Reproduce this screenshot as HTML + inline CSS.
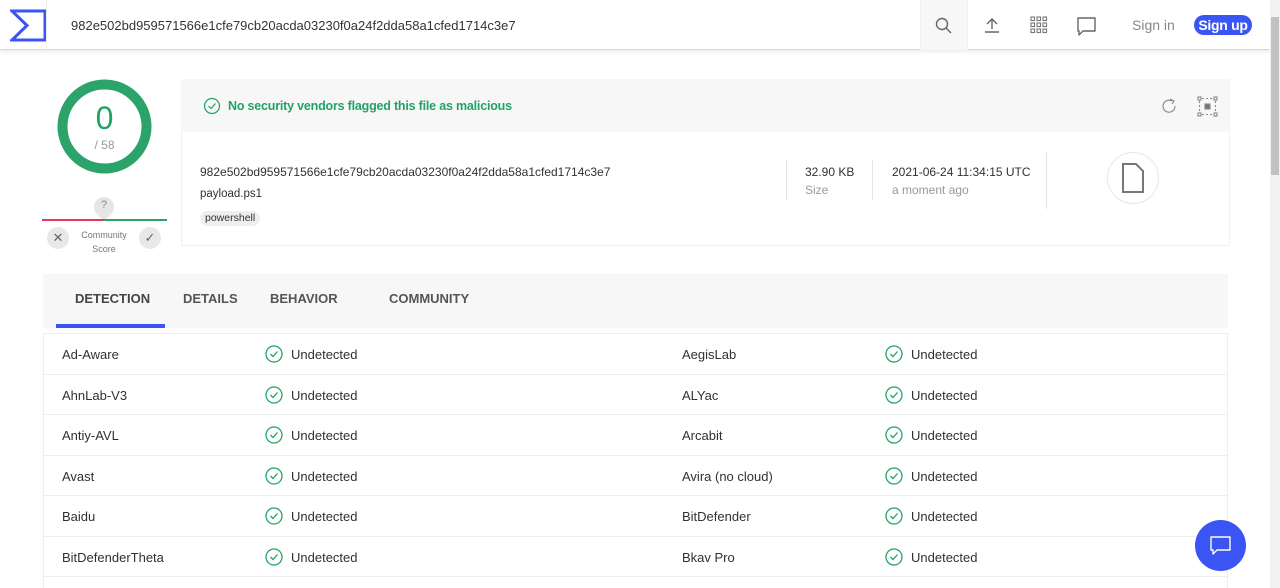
<!DOCTYPE html>
<html style="width:1280px;height:588px;overflow:hidden"><head><style>
*{box-sizing:border-box;margin:0;padding:0}
body{width:1280px;height:588px;overflow:hidden;background:#fff;font-family:"Liberation Sans",sans-serif;color:#313131;position:relative}
.hdr{position:absolute;left:0;top:0;width:1270px;height:50px;border-bottom:1px solid #d8d8d8;box-shadow:0 2px 4px rgba(0,0,0,.08);background:#fff}
.sb{position:absolute;right:0;top:0;width:10px;height:588px;background:#f1f1f1}
.thumb{position:absolute;right:1px;top:17px;width:8px;height:158px;background:#c1c1c1}
.abs{position:absolute}
.green{color:#21a366}
.tbl{position:absolute;left:43px;top:333px;width:1185px;height:255px;border:1px solid #eee;border-bottom:none;overflow:hidden}
.row{height:40.5px;border-bottom:1px solid #eee;position:relative;font-size:13px}
.row span{position:absolute;top:13px}
.ck{position:absolute;top:11px;width:18px;height:18px}
</style></head><body>
<div class="hdr">
 <svg class="abs" style="left:10px;top:9px" width="37" height="33" viewBox="0 0 37 33"><path d="M2 2H35V31H2L17 16.5Z" fill="none" stroke="#3b55f5" stroke-width="3"/></svg>
 <div class="abs" style="left:46px;top:0;width:1px;height:50px;background:#eee"></div>
 <div class="abs" style="left:71px;top:18px;font-size:13px;color:#333">982e502bd959571566e1cfe79cb20acda03230f0a24f2dda58a1cfed1714c3e7</div>
 <div class="abs" style="left:920px;top:0;width:48px;height:50px;background:#f7f7f7;border-left:1px solid #eee;border-right:1px solid #eee"></div>
 <svg class="abs" style="left:935px;top:17px" width="17" height="17"><circle cx="7" cy="7" r="5.5" fill="none" stroke="#666" stroke-width="1.4"/><path d="M11 11L16 16" stroke="#666" stroke-width="1.4"/></svg>
 <svg class="abs" style="left:983px;top:16px" width="18" height="18"><path d="M9 13V3M4 8L9 3L14 8M2 16H16" fill="none" stroke="#666" stroke-width="1.4"/></svg>
 <svg class="abs" style="left:1030px;top:16px" width="18" height="18" fill="none" stroke="#777" stroke-width="1.1"><g><rect x="1" y="1" width="3.5" height="3.5"/><rect x="7" y="1" width="3.5" height="3.5"/><rect x="13" y="1" width="3.5" height="3.5"/><rect x="1" y="7" width="3.5" height="3.5"/><rect x="7" y="7" width="3.5" height="3.5"/><rect x="13" y="7" width="3.5" height="3.5"/><rect x="1" y="13" width="3.5" height="3.5"/><rect x="7" y="13" width="3.5" height="3.5"/><rect x="13" y="13" width="3.5" height="3.5"/></g></svg>
 <svg class="abs" style="left:1076px;top:16px" width="21" height="20"><path d="M2 2H19V15H7L3 19V15H2Z" fill="none" stroke="#666" stroke-width="1.4" stroke-linejoin="round"/></svg>
 <div class="abs" style="left:1132px;top:17px;font-size:14px;color:#888">Sign in</div>
 <div class="abs" style="left:1194px;top:15px;width:58px;height:20px;border-radius:10px;background:#3b55f5;color:#fff;font-weight:bold;font-size:14px;text-align:center;line-height:20px;letter-spacing:-.3px">Sign up</div>
</div>
<div class="sb"><div class="thumb"></div></div>

<svg class="abs" style="left:56px;top:78px" width="97" height="97"><circle cx="48.5" cy="48.5" r="42" fill="#fff" stroke="#2ba36a" stroke-width="10"/></svg>
<div class="abs" style="left:56px;top:100px;width:97px;text-align:center;font-size:32px;color:#21a366">0</div>
<div class="abs" style="left:56px;top:138px;width:97px;text-align:center;font-size:12px;color:#999">/ 58</div>
<div class="abs" style="left:94px;top:197px;width:20px;height:20px;border-radius:50% 50% 50% 0;transform:rotate(-45deg);background:#e6e6e6"></div>
<div class="abs" style="left:94px;top:199px;width:20px;text-align:center;font-size:11px;color:#888">?</div>
<div class="abs" style="left:42px;top:219px;width:62px;height:2px;background:#e9375a"></div>
<div class="abs" style="left:104px;top:219px;width:63px;height:2px;background:#2ba36a"></div>
<div class="abs" style="left:47px;top:227px;width:22px;height:22px;border-radius:50%;background:#e8e8e8;text-align:center;line-height:22px;color:#666;font-size:13px">✕</div>
<div class="abs" style="left:139px;top:227px;width:22px;height:22px;border-radius:50%;background:#e8e8e8;text-align:center;line-height:22px;color:#666;font-size:13px">✓</div>
<div class="abs" style="left:72px;top:228px;width:64px;text-align:center;font-size:9px;color:#777;line-height:14px">Community<br>Score</div>

<div class="abs" style="left:181px;top:79px;width:1049px;height:53px;background:#f7f7f7"></div>
<svg class="abs" style="left:203px;top:97px" width="18" height="18"><circle cx="9" cy="9" r="7.5" fill="none" stroke="#21a366" stroke-width="1.2"/><path d="M5.5 9L8 11.5L12.5 6.5" fill="none" stroke="#21a366" stroke-width="1.2"/></svg>
<div class="abs green" style="left:228px;top:99px;font-size:12.5px;font-weight:bold;letter-spacing:-.2px">No security vendors flagged this file as malicious</div>
<svg class="abs" style="left:1160px;top:97px" width="18" height="18"><path d="M15 9A6 6 0 1 1 12 4" fill="none" stroke="#888" stroke-width="1.1"/><path d="M10 2L14 4L12 7" fill="none" stroke="#888" stroke-width="1.1"/></svg>
<svg class="abs" style="left:1197px;top:96px" width="21" height="21" fill="none" stroke="#888" stroke-width="1.1"><rect x="1" y="1" width="3" height="3"/><rect x="17" y="1" width="3" height="3"/><rect x="1" y="17" width="3" height="3"/><rect x="17" y="17" width="3" height="3"/><rect x="8" y="8" width="5" height="5" fill="#777"/><path d="M5 2.5H16M5 18.5H16M2.5 5V16M18.5 5V16" stroke-dasharray="2 2"/></svg>
<div class="abs" style="left:181px;top:132px;width:1049px;height:114px;border:1px solid #f0f0f0;border-top:none"></div>
<div class="abs" style="left:200px;top:165px;font-size:12px">982e502bd959571566e1cfe79cb20acda03230f0a24f2dda58a1cfed1714c3e7</div>
<div class="abs" style="left:200px;top:188px;font-size:11.5px">payload.ps1</div>
<div class="abs" style="left:200px;top:211px;height:15px;padding:0 5px;background:#eee;border-radius:8px;font-size:10.5px;line-height:15px">powershell</div>
<div class="abs" style="left:786px;top:160px;width:1px;height:40px;background:#e4e4e4"></div>
<div class="abs" style="left:805px;top:165px;font-size:12px">32.90 KB</div>
<div class="abs" style="left:805px;top:183px;font-size:12px;color:#999">Size</div>
<div class="abs" style="left:872px;top:160px;width:1px;height:40px;background:#e4e4e4"></div>
<div class="abs" style="left:892px;top:165px;font-size:12px">2021-06-24 11:34:15 UTC</div>
<div class="abs" style="left:892px;top:183px;font-size:12px;color:#999">a moment ago</div>
<div class="abs" style="left:1046px;top:152px;width:1px;height:57px;background:#e4e4e4"></div>
<div class="abs" style="left:1107px;top:152px;width:52px;height:52px;border-radius:50%;border:1px solid #e6e6e6"></div>
<svg class="abs" style="left:1121px;top:162px" width="24" height="32"><path d="M2 2H15L22 9V30H2Z" fill="none" stroke="#777" stroke-width="2"/></svg>

<div class="abs" style="left:43px;top:274px;width:1185px;height:54px;background:#f7f7f7"></div>
<div class="abs" style="left:75px;top:291px;font-size:13px;font-weight:bold;color:#444">DETECTION</div>
<div class="abs" style="left:183px;top:291px;font-size:13px;font-weight:bold;color:#555">DETAILS</div>
<div class="abs" style="left:270px;top:291px;font-size:13px;font-weight:bold;color:#555">BEHAVIOR</div>
<div class="abs" style="left:389px;top:291px;font-size:13px;font-weight:bold;color:#555">COMMUNITY</div>
<div class="abs" style="left:56px;top:324px;width:109px;height:4px;background:#3b55f5"></div>

<div class="tbl">
<div class="row"><span style="left:18px">Ad-Aware</span><svg class="ck" style="left:221px"><circle cx="9" cy="9" r="8" fill="none" stroke="#21a366" stroke-width="1.3"/><path d="M5.5 9L8 11.5L12.5 6.5" fill="none" stroke="#21a366" stroke-width="1.3"/></svg><span style="left:247px">Undetected</span><span style="left:638px">AegisLab</span><svg class="ck" style="left:841px"><circle cx="9" cy="9" r="8" fill="none" stroke="#21a366" stroke-width="1.3"/><path d="M5.5 9L8 11.5L12.5 6.5" fill="none" stroke="#21a366" stroke-width="1.3"/></svg><span style="left:867px">Undetected</span></div>
<div class="row"><span style="left:18px">AhnLab-V3</span><svg class="ck" style="left:221px"><circle cx="9" cy="9" r="8" fill="none" stroke="#21a366" stroke-width="1.3"/><path d="M5.5 9L8 11.5L12.5 6.5" fill="none" stroke="#21a366" stroke-width="1.3"/></svg><span style="left:247px">Undetected</span><span style="left:638px">ALYac</span><svg class="ck" style="left:841px"><circle cx="9" cy="9" r="8" fill="none" stroke="#21a366" stroke-width="1.3"/><path d="M5.5 9L8 11.5L12.5 6.5" fill="none" stroke="#21a366" stroke-width="1.3"/></svg><span style="left:867px">Undetected</span></div>
<div class="row"><span style="left:18px">Antiy-AVL</span><svg class="ck" style="left:221px"><circle cx="9" cy="9" r="8" fill="none" stroke="#21a366" stroke-width="1.3"/><path d="M5.5 9L8 11.5L12.5 6.5" fill="none" stroke="#21a366" stroke-width="1.3"/></svg><span style="left:247px">Undetected</span><span style="left:638px">Arcabit</span><svg class="ck" style="left:841px"><circle cx="9" cy="9" r="8" fill="none" stroke="#21a366" stroke-width="1.3"/><path d="M5.5 9L8 11.5L12.5 6.5" fill="none" stroke="#21a366" stroke-width="1.3"/></svg><span style="left:867px">Undetected</span></div>
<div class="row"><span style="left:18px">Avast</span><svg class="ck" style="left:221px"><circle cx="9" cy="9" r="8" fill="none" stroke="#21a366" stroke-width="1.3"/><path d="M5.5 9L8 11.5L12.5 6.5" fill="none" stroke="#21a366" stroke-width="1.3"/></svg><span style="left:247px">Undetected</span><span style="left:638px">Avira (no cloud)</span><svg class="ck" style="left:841px"><circle cx="9" cy="9" r="8" fill="none" stroke="#21a366" stroke-width="1.3"/><path d="M5.5 9L8 11.5L12.5 6.5" fill="none" stroke="#21a366" stroke-width="1.3"/></svg><span style="left:867px">Undetected</span></div>
<div class="row"><span style="left:18px">Baidu</span><svg class="ck" style="left:221px"><circle cx="9" cy="9" r="8" fill="none" stroke="#21a366" stroke-width="1.3"/><path d="M5.5 9L8 11.5L12.5 6.5" fill="none" stroke="#21a366" stroke-width="1.3"/></svg><span style="left:247px">Undetected</span><span style="left:638px">BitDefender</span><svg class="ck" style="left:841px"><circle cx="9" cy="9" r="8" fill="none" stroke="#21a366" stroke-width="1.3"/><path d="M5.5 9L8 11.5L12.5 6.5" fill="none" stroke="#21a366" stroke-width="1.3"/></svg><span style="left:867px">Undetected</span></div>
<div class="row"><span style="left:18px">BitDefenderTheta</span><svg class="ck" style="left:221px"><circle cx="9" cy="9" r="8" fill="none" stroke="#21a366" stroke-width="1.3"/><path d="M5.5 9L8 11.5L12.5 6.5" fill="none" stroke="#21a366" stroke-width="1.3"/></svg><span style="left:247px">Undetected</span><span style="left:638px">Bkav Pro</span><svg class="ck" style="left:841px"><circle cx="9" cy="9" r="8" fill="none" stroke="#21a366" stroke-width="1.3"/><path d="M5.5 9L8 11.5L12.5 6.5" fill="none" stroke="#21a366" stroke-width="1.3"/></svg><span style="left:867px">Undetected</span></div>
</div>

<div class="abs" style="left:1195px;top:520px;width:51px;height:51px;border-radius:50%;background:#3b55f5"></div>
<svg class="abs" style="left:1209px;top:535px" width="23" height="22"><path d="M2 2H21V15H8L4 19V15H2Z" fill="none" stroke="#fff" stroke-width="1.4" stroke-linejoin="round"/></svg>
</body></html>
